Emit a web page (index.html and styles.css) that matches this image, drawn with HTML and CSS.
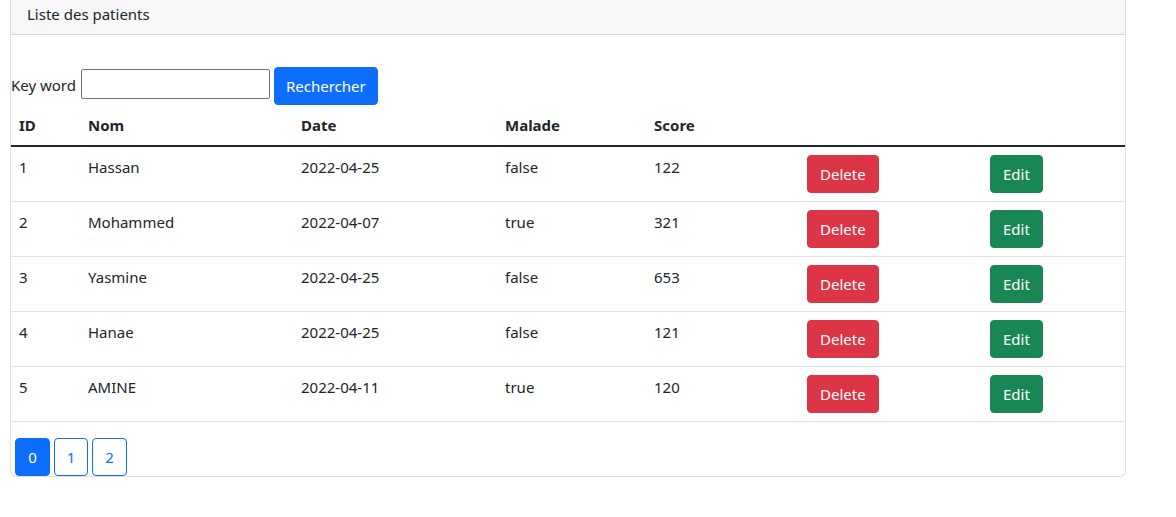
FILE: index.html
```html
<!DOCTYPE html>
<html lang="fr">
<head>
<meta charset="utf-8">
<title>Liste des patients</title>
<link rel="stylesheet" href="styles.css">
</head>
<body>
<div class="card">
  <div class="card-header">Liste des patients</div>
  <div class="card-body">
    <form class="search">
      <label for="kw">Key word</label>
      <input id="kw" type="text" class="kw-input">
      <button type="button" class="btn btn-primary">Rechercher</button>
    </form>
    <table class="table">
      <colgroup>
        <col class="c-id"><col class="c-nom"><col class="c-date"><col class="c-malade"><col class="c-score"><col class="c-del"><col class="c-edit">
      </colgroup>
      <thead>
        <tr><th>ID</th><th>Nom</th><th>Date</th><th>Malade</th><th>Score</th><th></th><th></th></tr>
      </thead>
      <tbody>
        <tr><td>1</td><td>Hassan</td><td>2022-04-25</td><td>false</td><td>122</td><td><button class="btn btn-danger">Delete</button></td><td><button class="btn btn-success">Edit</button></td></tr>
        <tr><td>2</td><td>Mohammed</td><td>2022-04-07</td><td>true</td><td>321</td><td><button class="btn btn-danger">Delete</button></td><td><button class="btn btn-success">Edit</button></td></tr>
        <tr><td>3</td><td>Yasmine</td><td>2022-04-25</td><td>false</td><td>653</td><td><button class="btn btn-danger">Delete</button></td><td><button class="btn btn-success">Edit</button></td></tr>
        <tr><td>4</td><td>Hanae</td><td>2022-04-25</td><td>false</td><td>121</td><td><button class="btn btn-danger">Delete</button></td><td><button class="btn btn-success">Edit</button></td></tr>
        <tr><td>5</td><td>AMINE</td><td>2022-04-11</td><td>true</td><td>120</td><td><button class="btn btn-danger">Delete</button></td><td><button class="btn btn-success">Edit</button></td></tr>
      </tbody>
    </table>
    <ul class="pages">
      <li><a class="btn btn-page active">0</a></li>
      <li><a class="btn btn-page narrow">1</a></li>
      <li><a class="btn btn-page">2</a></li>
    </ul>
  </div>
</div>
</body>
</html>
```
FILE: styles.css
```css
* { box-sizing: border-box; }
html, body { margin: 0; padding: 0; background: #fff; }
body {
  font-family: "Noto Sans", "Open Sans", sans-serif;
  font-size: 15px;
  line-height: 24px;
  color: #212529;
}
.card {
  margin: -7px 0 0 10px;
  width: 1116px;
  border: 1px solid rgba(0,0,0,.125);
  border-radius: 6px;
  background: #fff;
}
.card-header {
  padding: 8px 16px;
  background: rgba(0,0,0,.03);
  border-bottom: 1px solid rgba(0,0,0,.125);
}
.card-body { padding: 32px 0 0 0; }
.search {
  display: flex;
  align-items: flex-start;
  height: 38px;
  margin: 0;
}
.search label { margin: 6px 5px 0 0; }
.kw-input {
  width: 189px;
  height: 30px;
  margin: 2px 4px 0 0;
  border: 1px solid #767676;
  border-radius: 2px;
  padding: 1px 2px;
  font: inherit;
}
.btn {
  display: inline-block;
  padding: 6px 12px;
  font-family: inherit;
  font-size: 15px;
  line-height: 24px;
  border: 1px solid transparent;
  border-radius: 4px;
  color: #fff;
  cursor: pointer;
  text-align: center;
  text-decoration: none;
}
.btn-primary { background: #0d6efd; border-color: #0d6efd; padding: 6px 11px; }
.btn-danger { background: #dc3545; border-color: #dc3545; }
.btn-success { background: #198754; border-color: #198754; }
.table {
  width: 1114px;
  border-collapse: collapse;
  table-layout: fixed;
  margin-bottom: 16px;
}
.c-id { width: 69px; }
.c-nom { width: 213px; }
.c-date { width: 204px; }
.c-malade { width: 149px; }
.c-score { width: 153px; }
.c-del { width: 183px; }
.c-edit { width: 143px; }
.table th {
  text-align: left;
  font-weight: 700;
  padding: 8px;
  border-bottom: 2px solid #212529;
  vertical-align: bottom;
}
.table td {
  padding: 8px;
  border-bottom: 1px solid #dee2e6;
  vertical-align: top;
}
.pages {
  list-style: none;
  margin: 0;
  padding: 0 0 0 4px;
  display: flex;
  gap: 4px;
}
.btn-page {
  color: #0d6efd;
  border-color: #0d6efd;
  background: #fff;
  width: 35px;
  padding: 6px 0;
}
.btn-page.narrow { width: 34px; }
.btn-page.active { background: #0d6efd; color: #fff; }
```
